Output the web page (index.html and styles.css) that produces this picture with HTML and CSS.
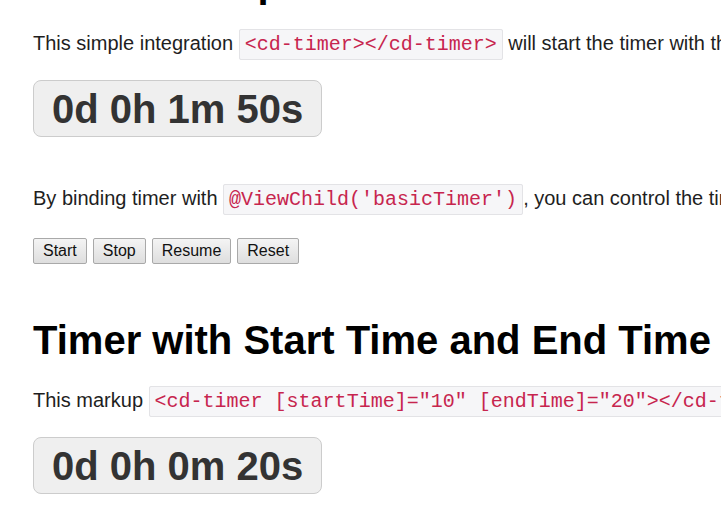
FILE: index.html
```html
<!DOCTYPE html>
<html lang="en">
<head>
<meta charset="utf-8">
<title>Countdown Timer Demo</title>
<link rel="stylesheet" href="styles.css">
</head>
<body>
<main class="page">
  <h2 class="title">Basic Example</h2>
  <p class="text">This simple integration <code class="code">&lt;cd-timer&gt;&lt;/cd-timer&gt;</code> will start the timer with the default settings.</p>
  <div class="timer">0d 0h 1m 50s</div>
  <p class="text text-gap">By binding timer with <code class="code">@ViewChild('basicTimer')</code>, you can control the timer with the buttons below.</p>
  <div class="actions">
    <button class="btn" type="button">Start</button>
    <button class="btn" type="button">Stop</button>
    <button class="btn" type="button">Resume</button>
    <button class="btn" type="button">Reset</button>
  </div>
  <h2 class="title">Timer with Start Time and End Time</h2>
  <p class="text">This markup <code class="code">&lt;cd-timer [startTime]="10" [endTime]="20"&gt;&lt;/cd-timer&gt;</code> will count from 10 to 20 seconds.</p>
  <div class="timer">0d 0h 0m 20s</div>
</main>
</body>
</html>
```

FILE: styles.css
```css
html, body {
  margin: 0;
  padding: 0;
  overflow: hidden;
  background: #ffffff;
}

.page {
  margin-top: -41px;
  padding-left: 33px;
  font-family: "Liberation Sans", Arial, sans-serif;
  color: #1e1e1e;
}

.title {
  margin: 0 0 22px;
  font-size: 40px;
  line-height: 48px;
  font-weight: bold;
  color: #000000;
  white-space: nowrap;
}

.text {
  margin: 0 0 23px;
  font-size: 20px;
  line-height: 28px;
  white-space: nowrap;
}

.text-gap {
  margin-bottom: 26px;
}

.code {
  font-family: "Liberation Mono", "Courier New", monospace;
  font-size: 20px;
  line-height: 20px;
  color: #c7254e;
  background: #f6f6f8;
  border: 1px solid #e3e3e6;
  border-radius: 2px;
  padding: 3px 5px;
}

.timer {
  display: block;
  width: fit-content;
  margin-bottom: 47px;
  padding: 5.5px 18px;
  font-size: 40px;
  line-height: 44px;
  font-weight: bold;
  color: #333333;
  background: #efefef;
  border: 1px solid #cccccc;
  border-radius: 8px;
}

.actions {
  display: flex;
  gap: 6px;
  margin-bottom: 52px;
}

.btn {
  height: 26px;
  padding: 0 9px;
  font-family: "Liberation Sans", Arial, sans-serif;
  font-size: 16px;
  line-height: 24px;
  color: #111111;
  background: linear-gradient(#f4f4f4, #dedede);
  border: 1px solid #a9a9a9;
  border-radius: 2px;
}
```
